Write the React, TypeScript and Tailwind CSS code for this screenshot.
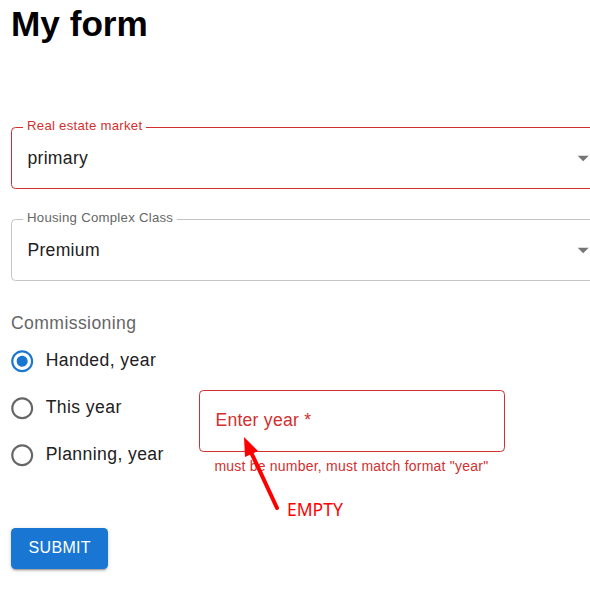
import React from "react";

function OutlinedSelect({ label, value, error }: { label: string; value: string; error?: boolean }) {
  return (
    <div
      className={`relative h-[62px] w-[594px] rounded-[4.4px] border flex items-center pl-[15.4px] ${
        error ? "border-[#d32f2f]" : "border-[#c4c4c4]"
      }`}
    >
      <span
        className={`absolute left-[11px] -top-[10px] px-[4px] bg-white text-[13.2px] leading-[16px] tracking-[0.26px] ${
          error ? "text-[#d32f2f]" : "text-[#666666]"
        }`}
      >
        {label}
      </span>
      <span className="text-[17.6px] text-[#212121] leading-[25px] tracking-[0.3px]">{value}</span>
      <svg
        className="absolute right-[7.7px] top-1/2 -translate-y-1/2"
        width="26.4"
        height="26.4"
        viewBox="0 0 24 24"
        fill="#757575"
      >
        <path d="M7 10l5 5 5-5z" />
      </svg>
    </div>
  );
}

function Radio({ checked, label }: { checked?: boolean; label: string }) {
  return (
    <div className="flex items-center h-[47px]">
      <svg
        className="-ml-[1.7px] mr-[10px] shrink-0"
        width="26.4"
        height="26.4"
        viewBox="0 0 24 24"
        fill={checked ? "#1976d2" : "#666666"}
      >
        <path d="M12 2C6.48 2 2 6.48 2 12s4.48 10 10 10 10-4.48 10-10S17.52 2 12 2zm0 18c-4.42 0-8-3.58-8-8s3.58-8 8-8 8 3.58 8 8-3.58 8-8 8z" />
        {checked && (
          <path d="M8.465 8.465C9.37 7.56 10.62 7 12 7C14.76 7 17 9.24 17 12C17 13.38 16.44 14.63 15.535 15.535C14.63 16.44 13.38 17 12 17C9.24 17 7 14.76 7 12C7 10.62 7.56 9.37 8.465 8.465Z" />
        )}
      </svg>
      <span className="text-[17.6px] text-[#212121] leading-[25px] tracking-[0.4px]">{label}</span>
    </div>
  );
}

export default function App() {
  return (
    <div className="relative w-[590px] h-[611px] overflow-hidden bg-white font-['Liberation_Sans',Arial,sans-serif]">
      <div className="pl-[11px]">
        <h1 className="text-[35.2px] font-bold leading-[35px] pt-[6px] text-black">My form</h1>

        <div className="mt-[86px]">
          <OutlinedSelect label="Real estate market" value="primary" error />
        </div>
        <div className="mt-[30px]">
          <OutlinedSelect label="Housing Complex Class" value="Premium" />
        </div>

        <div className="mt-[30.4px] text-[17.6px] leading-[25px] tracking-[0.4px] text-[#666666]">Commissioning</div>

        <div className="flex pt-[1px]">
          <div className="w-[188px] shrink-0 flex flex-col">
            <Radio checked label="Handed, year" />
            <Radio label="This year" />
            <Radio label="Planning, year" />
          </div>
          <div className="mt-[52.5px] flex flex-col">
            <div className="w-[306px] h-[62px] rounded-[4.4px] border border-[#d32f2f] flex items-center pl-[15.4px]">
              <span className="text-[17.6px] leading-[25px] tracking-[0.25px] text-[#d32f2f]">Enter year *</span>
            </div>
            <div className="mt-[3px] pl-[15.4px] text-[14px] leading-[22px] tracking-[0.22px] text-[#d32f2f]">
              must be number, must match format "year"
            </div>
          </div>
        </div>

        <button className="mt-[49.5px] h-[41px] px-[17.6px] rounded-[4.4px] bg-[#1976d2] text-white text-[16px] leading-[20px] tracking-[0.3px] uppercase shadow-[0px_3px_1px_-2px_rgba(0,0,0,0.2),0px_2px_2px_0px_rgba(0,0,0,0.14),0px_1px_5px_0px_rgba(0,0,0,0.12)]">
          Submit
        </button>
      </div>

      <svg className="absolute inset-0 pointer-events-none" width="590" height="611" viewBox="0 0 590 611">
        <line x1="277" y1="508" x2="250" y2="450" stroke="#ff0000" strokeWidth="4" strokeLinecap="round" />
        <polygon points="244,437 258,451 245,457" fill="#ff0000" />
      </svg>
      <span className="absolute left-[287px] top-[497px] text-[17.5px] leading-[24px] text-[#ff0000] font-['Noto_Sans',sans-serif]">
        EMPTY
      </span>
    </div>
  );
}
